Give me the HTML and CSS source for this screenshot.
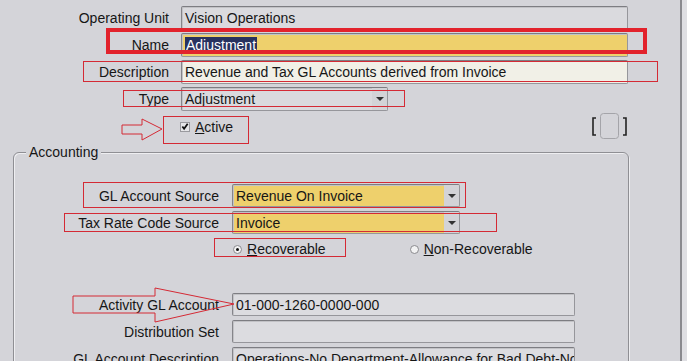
FILE: index.html
```html
<!DOCTYPE html>
<html lang="en">
<head>
  <meta charset="UTF-8" />
  <title>Receivable Activities</title>
  <link rel="stylesheet" href="styles.css">
</head>
<body>

  <div class="screen">
    <div class="main">

      <div class="row">
        <span class="label">Operating Unit</span>
        <div class="field wide">Vision Operations</div>
      </div>
      <div class="row">
        <span class="label">Name</span>
        <div class="field wide req"><span class="sel">Adjustment</span></div>
      </div>
      <div class="row">
        <span class="label">Description</span>
        <div class="field wide light">Revenue and Tax GL Accounts derived from Invoice</div>
      </div>
      <div class="row">
        <span class="label">Type</span>
        <div class="field type">Adjustment<span class="drop"><i></i></span></div>
      </div>

      <div class="row check-row">
        <label class="check">
          <span class="box">
            <svg width="9" height="9" viewBox="0 0 9 9"><path d="M1.5 4.5 L3.5 7 L7.5 1.5" fill="none" stroke="#111" stroke-width="2"/></svg>
          </span>
          <span><u>A</u>ctive</span>
        </label>
        <svg class="brackets" width="36" height="26" viewBox="0 0 36 26">
          <path d="M4 5 H1 V22 H4" fill="none" stroke="#222" stroke-width="1.6"/>
          <rect x="8.5" y="0.5" width="18" height="25" rx="3" fill="none" stroke="#a4a4a9"/>
          <path d="M31 5 H34 V22 H31" fill="none" stroke="#222" stroke-width="1.6"/>
        </svg>
      </div>

      <div class="group">
        <div class="group-title">Accounting</div>

        <div class="grows">
          <div class="row grow">
            <span class="label">GL Account Source</span>
            <div class="field src req">Revenue On Invoice<span class="drop"><i></i></span></div>
          </div>
          <div class="row grow">
            <span class="label">Tax Rate Code Source</span>
            <div class="field src req">Invoice<span class="drop"><i></i></span></div>
          </div>

          <div class="radio-row">
            <label class="radio"><span class="dot on"></span><span><u>R</u>ecoverable</span></label>
            <label class="radio"><span class="dot"></span><span><u>N</u>on-Recoverable</span></label>
          </div>

          <div class="row grow acct">
            <span class="label">Activity GL Account</span>
            <div class="field acc">01-000-1260-0000-000</div>
          </div>
          <div class="row grow">
            <span class="label">Distribution Set</span>
            <div class="field acc"></div>
          </div>
          <div class="row grow">
            <span class="label">GL Account Description</span>
            <div class="field acc">Operations-No Department-Allowance for Bad Debt-No</div>
          </div>
        </div>
      </div>

    </div>
    <div class="edge"></div>

    <!-- red annotations drawn over the form -->
    <div class="mark thick m-name"></div>
    <div class="mark m-desc"></div>
    <div class="mark m-type"></div>
    <div class="mark m-active"></div>
    <div class="mark m-src"></div>
    <div class="mark m-tax"></div>
    <div class="mark m-rec"></div>
    <svg class="arrows" width="687" height="361" viewBox="0 0 687 361">
      <polygon points="122,125 142,125 142,119 162,129 142,140 142,134 122,134" fill="none" stroke="#d42a35" stroke-width="1"/>
      <polygon points="73,296 155,296 155,288 234,304 155,322 155,313 73,313" fill="none" stroke="#d42a35" stroke-width="1"/>
    </svg>
  </div>

</body>
</html>
```

FILE: styles.css
```css
body {
  margin: 0;
  background: #d4d4d9;
  font-family: "Liberation Sans", Arial, sans-serif;
  font-size: 14px;
  color: #161616;
}

.screen {
  position: relative;
  width: 687px;
  height: 361px;
  overflow: hidden;
  display: flex;
}

.main {
  width: 680px;
  padding-top: 6px;
}

.edge {
  flex: 1;
  border-left: 2px solid #8a8a8f;
  background: #dfdfe3;
}

.row {
  display: flex;
  align-items: center;
  height: 24px;
  margin-bottom: 3px;
}

.label {
  width: 169px;
  padding-right: 12px;
  text-align: right;
  white-space: nowrap;
}

.field {
  box-sizing: border-box;
  height: 100%;
  display: flex;
  align-items: center;
  padding-left: 3px;
  background: #dadade;
  border: 1px solid #96969b;
  border-top-color: #7d7d82;
  border-left-color: #85858a;
  border-radius: 2px;
  box-shadow: inset 1px 1px 0 #c2c2c6;
  white-space: nowrap;
  overflow: hidden;
}

.wide { width: 447px; }
.type { width: 207px; }
.light { background: #f1f0e7; }
.req { background: #eed06c; }

.sel {
  background: #28325f;
  color: #fff;
  padding: 0 1px;
  line-height: 17px;
}

.drop {
  margin-left: auto;
  align-self: stretch;
  width: 15px;
  display: flex;
  align-items: center;
  justify-content: center;
  background: #d3d3d7;
}

.drop i {
  width: 0;
  height: 0;
  border-left: 4px solid transparent;
  border-right: 4px solid transparent;
  border-top: 4px solid #333;
}

.check-row {
  padding-left: 180px;
}

.check {
  display: flex;
  align-items: center;
  gap: 5px;
  margin-top: 1px;
}

.check .box {
  box-sizing: border-box;
  width: 10px;
  height: 10px;
  display: flex;
  align-items: center;
  justify-content: center;
  background: #e6e6e9;
  border: 1px solid #9a9a9f;
}

.brackets {
  margin-left: auto;
  margin-right: 52px;
}

/* Accounting block */
.group {
  margin: 14px 0 0 13px;
  width: 614px;
  height: 240px;
  border: 1px solid #8f8f94;
  border-radius: 6px;
  box-shadow: inset 1px 1px 0 #eeeef1, 1px 1px 0 #eeeef1;
}

.group-title {
  width: fit-content;
  margin: -9px 0 0 12px;
  padding: 0 3px;
  line-height: 16px;
  background: #d4d4d9;
}

.grows { padding-top: 24px; }

.grow {
  height: 23px;
  margin-bottom: 4px;
}

.grow .label {
  width: 205px;
  padding-right: 13px;
}

.src { width: 228px; }
.acc { width: 343px; background: #dcdce0; }

.radio-row {
  display: flex;
  align-items: center;
  height: 22px;
  padding-left: 219px;
  margin-bottom: 33px;
}

.radio {
  display: flex;
  align-items: center;
  gap: 5px;
}

.radio + .radio { margin-left: 84px; }

.dot {
  box-sizing: border-box;
  width: 9px;
  height: 9px;
  border-radius: 50%;
  border: 1px solid #8a8a8f;
  background: #f2f2f3;
  display: flex;
  align-items: center;
  justify-content: center;
}

.dot.on::after {
  content: "";
  width: 3px;
  height: 3px;
  border-radius: 50%;
  background: #111;
}

/* annotations */
.mark {
  position: absolute;
  box-sizing: border-box;
  border: 1px solid #d42a35;
}

.mark.thick {
  border: 4px solid #e2222c;
}

.m-name { left: 106px; top: 28px; width: 541px; height: 26px; }
.m-desc { left: 83px; top: 61px; width: 575px; height: 21px; }
.m-type { left: 123px; top: 90px; width: 282px; height: 17px; }
.m-active { left: 163px; top: 116px; width: 86px; height: 28px; }
.m-src { left: 83px; top: 182px; width: 383px; height: 26px; }
.m-tax { left: 64px; top: 213px; width: 433px; height: 19px; }
.m-rec { left: 214px; top: 238px; width: 132px; height: 19px; }

.arrows {
  position: absolute;
  left: 0;
  top: 0;
  pointer-events: none;
}
```
